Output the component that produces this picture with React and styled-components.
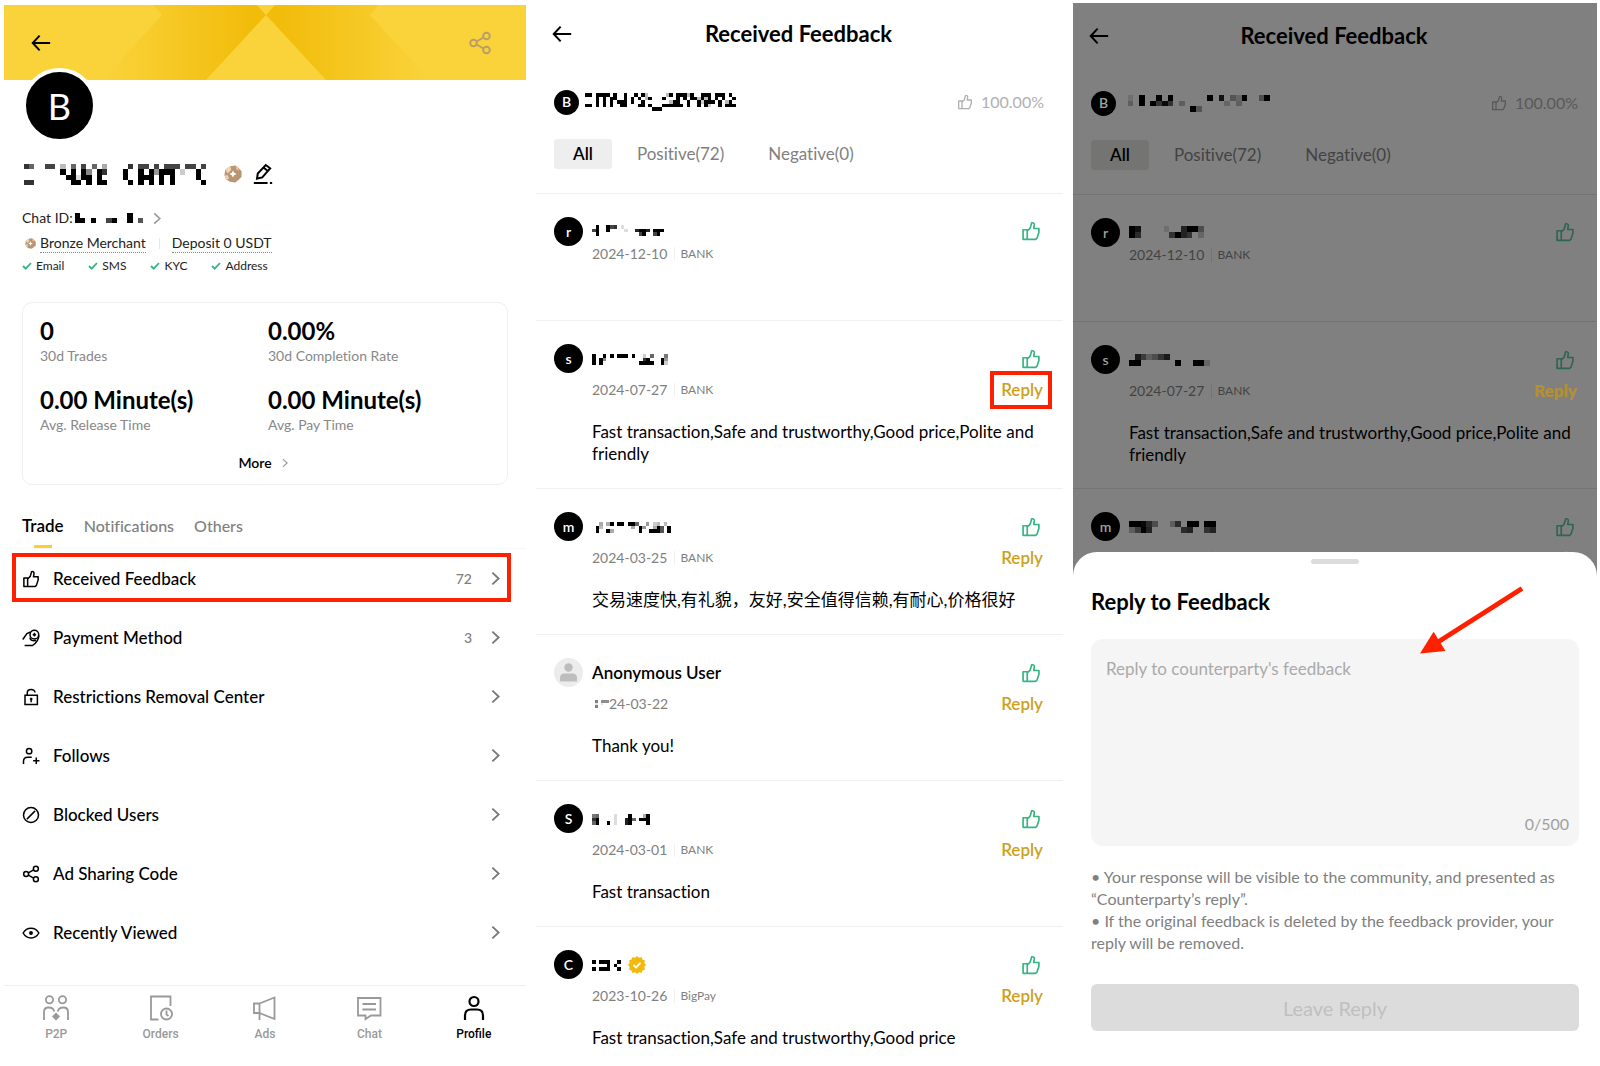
import React, { useState } from 'react';
import styled, { createGlobalStyle, ThemeProvider } from 'styled-components';

const GlobalStyle = createGlobalStyle`
  * {
    box-sizing: border-box;
  }
  body {
    margin: 0;
    background: #ffffff;
    color: #000000;
    font-family: Lato, 'Noto Sans CJK SC', sans-serif;
    font-size: 17px;
    line-height: 22px;
    font-variant-ligatures: none;
  }
  button, textarea {
    font: inherit;
    color: inherit;
    border: 0;
    padding: 0;
    background: none;
  }
  button {
    cursor: pointer;
  }
  a {
    color: inherit;
    text-decoration: none;
  }
  h1, h2, p, ul, dl, dd, dt {
    margin: 0;
    padding: 0;
  }
  svg {
    display: block;
    flex: none;
  }
`

const light = {
  bg: '#ffffff',
  text: '#000000',
  muted: '#808080',
  faint: '#b0b0b0',
  line: '#f0f0f0',
  chip: '#eeeeee',
  green: '#35b57f',
  gold: '#cda01b',
  initial: '#ffffff',
  replyWeight: 600
}

const dim = {
  bg: '#808080',
  text: '#000000',
  muted: '#434343',
  faint: '#595959',
  line: '#747474',
  chip: '#747472',
  green: '#2f6552',
  gold: '#b38f35',
  initial: '#a0a0a0',
  replyWeight: 800
}

/* ---------- page ---------- */

const Page = styled.div`
  display: grid;
  grid-template-columns: 522fr 527fr 524fr;
  gap: 10px;
  min-height: 100vh;
  padding: 0 3px 0 4px;
`

const ProfilePanel = styled.section`
  display: flex;
  flex-direction: column;
  min-width: 0;
  padding-top: 5px;
`

const FeedbackPanel = styled.section`
  position: relative;
  min-width: 0;
  margin-top: ${props => (props.$sheet ? '3px' : '0')};
  background: ${props => props.theme.bg};
  color: ${props => props.theme.text};
`

/* ---------- profile ---------- */

const Banner = styled.header`
  display: grid;
  height: 75px;
  background: #fad33b;

  > * {
    grid-area: 1 / 1;
  }
`

const BannerArt = styled.svg`
  width: 100%;
  height: 75px;
`

const BannerBar = styled.div`
  display: flex;
  align-items: center;
  justify-content: space-between;
  padding: 0 34px 0 26px;
`

const IconButton = styled.button`
  display: flex;
  color: ${props => props.$color || 'inherit'};
`

const Identity = styled.div`
  padding: 0 18px;
`

const BigAvatar = styled.div`
  position: relative;
  display: flex;
  align-items: center;
  justify-content: center;
  width: 75px;
  height: 75px;
  margin-top: -12px;
  border: 4px solid #ffffff;
  border-radius: 50%;
  background: #000000;
  color: #ffffff;
  font-size: 36px;
`

const NameLine = styled.div`
  display: flex;
  align-items: center;
  gap: 18px;
  height: 24px;
  margin-top: 19px;
  padding-left: 2px;
`

const NameIcons = styled.span`
  display: flex;
  align-items: center;
  gap: 10px;
`

const ChatId = styled.a`
  display: flex;
  align-items: center;
  gap: 2px;
  height: 20px;
  margin-top: 22px;
  font-size: 14px;
  line-height: 20px;
  color: #222222;

  > svg:last-child {
    margin-left: 8px;
  }
`

const Levels = styled.div`
  display: flex;
  align-items: center;
  height: 20px;
  margin-top: 5px;
  padding-left: 3px;
  font-size: 14px;
  line-height: 18px;
  color: #222222;

  > svg {
    margin-right: 4px;
  }
`

const Dotted = styled.span`
  border-bottom: 1px dotted #888888;
`

const LevelRule = styled.span`
  width: 1px;
  height: 11px;
  margin: 0 12px 0 13px;
  background: #e8e8e8;
`

const Checks = styled.ul`
  display: flex;
  gap: 24px;
  margin-top: 5px;
  list-style: none;
  font-size: 12px;
  line-height: 16px;
  color: #222222;

  li {
    display: flex;
    align-items: center;
    gap: 4px;
  }
`

const StatCard = styled.div`
  margin: 28px 18px 0;
  padding: 14px 17px 11px;
  border: 1px solid #efefef;
  border-radius: 10px;
`

const StatGrid = styled.dl`
  display: grid;
  grid-template-columns: 1fr 1fr;
  gap: 20px 6px;
`

const Stat = styled.div`
  display: flex;
  flex-direction: column-reverse;

  dt {
    margin-top: 1px;
    font-size: 14px;
    line-height: 20px;
    color: #888888;
  }
  dd {
    font-size: 24px;
    font-weight: 700;
    line-height: 28px;
  }
`

const More = styled.button`
  display: flex;
  align-items: center;
  gap: 10px;
  margin: 18px auto 0;
  padding-right: 4px;
  font-size: 14px;
  font-weight: 600;
  line-height: 20px;
`

const SectionTabs = styled.div`
  display: flex;
  gap: 20px;
  margin-top: 29px;
  padding: 0 18px;
  border-bottom: 1px solid #f6f6f6;
`

const SectionTab = styled.button`
  display: flex;
  flex-direction: column;
  align-items: center;
  font-size: ${props => (props.$active ? '17px' : '16px')};
  font-weight: ${props => (props.$active ? 600 : 500)};
  color: ${props => (props.$active ? '#000000' : '#808080')};
  line-height: 24px;

  &::after {
    content: '';
    width: 18px;
    height: 3px;
    margin-top: 7px;
    background: ${props => (props.$active ? '#f8d12f' : 'transparent')};
  }
`

const MenuRow = styled.a`
  position: relative;
  display: flex;
  align-items: center;
  height: 59px;
  padding: 0 26px 0 18px;
  font-weight: 500;

  &::before {
    content: '';
    position: absolute;
    inset: 4px 15px 6px 8px;
    border: ${props => (props.$marked ? '4px solid #ff2000' : '0')};
  }
`

const MenuLabel = styled.span`
  flex: 1;
  margin-left: 13px;
`

const MenuCount = styled.span`
  margin-right: 19px;
  font-size: 14px;
  color: #808080;
`

const BottomNav = styled.nav`
  display: grid;
  grid-template-columns: repeat(5, 1fr);
  margin-top: 23px;
  padding-top: 9px;
  border-top: 1px solid #f0f0f0;
`

const NavItem = styled.a`
  display: flex;
  flex-direction: column;
  align-items: center;
  gap: 4px;
  color: ${props => (props.$active ? '#000000' : '#999999')};
  font: 500 12px/18px Roboto, sans-serif;
`

/* ---------- feedback list ---------- */

const TitleBar = styled.header`
  display: grid;
  grid-template-columns: 24px 1fr 24px;
  align-items: center;
  height: ${props => (props.$short ? '66px' : '68px')};
  padding: 0 17px 0 15px;
`

const Title = styled.h1`
  font-size: 22px;
  font-weight: 700;
  line-height: 28px;
  text-align: center;
`

const Merchant = styled.div`
  display: flex;
  align-items: center;
  height: 30px;
  margin-top: 19px;
  padding: 0 19px 0 18px;
  gap: 6px;
`

const Initial = styled.span`
  display: flex;
  align-items: center;
  justify-content: center;
  flex: none;
  width: ${props => (props.$small ? '25px' : '29px')};
  height: ${props => (props.$small ? '25px' : '29px')};
  border-radius: 50%;
  background: #000000;
  color: ${props => props.theme.initial};
  font-size: 14px;
  font-weight: 600;
`

const Score = styled.span`
  display: flex;
  align-items: center;
  gap: 8px;
  margin-left: auto;
  font-size: 16px;
  color: ${props => props.theme.faint};
`

const Filters = styled.div`
  display: flex;
  gap: 6px;
  margin-top: 22px;
  padding: 0 18px 24px;
`

const Filter = styled.button`
  height: 30px;
  padding: 0 19px;
  border-radius: 3px;
  font-weight: ${props => (props.$active ? 600 : 400)};
  background: ${props => (props.$active ? props.theme.chip : 'transparent')};
  color: ${props => (props.$active ? props.theme.text : props.theme.muted)};
`

const Entry = styled.article`
  display: grid;
  grid-template-columns: 29px 1fr auto;
  grid-template-rows: ${props => (props.$bare ? '27px' : '30px')} 20px auto;
  column-gap: 9px;
  row-gap: ${props => (props.$bare ? '0' : '6px')};
  min-height: ${props => (props.$bare ? '127px' : '0')};
  padding: 23px 20px ${props => (props.$short ? '22px' : '23px')} 18px;
  border-top: 1px solid ${props => props.theme.line};

  &:last-child {
    padding-bottom: 12px;
  }
`

const EntryName = styled.div`
  display: flex;
  align-items: center;
  gap: 7px;
  font-weight: 600;
`

const EntryThumb = styled.span`
  display: flex;
  align-items: center;
  justify-content: flex-end;
  padding-right: 2px;
  color: ${props => props.theme.green};
`

const Meta = styled.div`
  grid-column: 2;
  display: flex;
  align-items: center;
  font-size: 14px;
  line-height: 20px;
  color: ${props => props.theme.muted};

  time {
    display: flex;
    align-items: center;
  }
`

const Channel = styled.span`
  margin-left: 7px;
  padding-left: 5px;
  border-left: 1px solid ${props => props.theme.line};
  font-size: 12px;
  line-height: 14px;
`

const Reply = styled.button`
  position: relative;
  color: ${props => props.theme.gold};
  font-weight: ${props => props.theme.replyWeight};
  line-height: 20px;

  &::after {
    content: '';
    position: absolute;
    inset: -9px -9px -9px -11px;
    border: ${props => (props.$marked ? '4px solid #ff2000' : '0')};
  }
`

const Comment = styled.p`
  grid-column: 2 / -1;
  margin-top: 15px;
`

/* ---------- reply sheet ---------- */

const Sheet = styled.form`
  position: absolute;
  left: 0;
  right: 0;
  bottom: 0;
  display: flex;
  flex-direction: column;
  padding: 7px 18px 35px;
  border-radius: 24px 24px 0 0;
  background: #ffffff;
  color: #000000;
`

const Handle = styled.span`
  align-self: center;
  width: 48px;
  height: 5px;
  border-radius: 3px;
  background: #dcdcdc;
`

const SheetTitle = styled.h2`
  margin-top: 24px;
  font-size: 22px;
  font-weight: 700;
  line-height: 28px;
`

const Field = styled.div`
  display: flex;
  flex-direction: column;
  height: 207px;
  margin-top: 23px;
  padding: 19px 10px 11px 15px;
  border-radius: 12px;
  background: #f5f5f5;
`

const FieldText = styled.textarea`
  flex: 1;
  resize: none;
  outline: 0;
  color: #000000;

  &::placeholder {
    color: #aaaaaa;
    opacity: 1;
  }
`

const Counter = styled.span`
  align-self: flex-end;
  font-size: 16px;
  color: #a0a0a0;
`

const Notes = styled.div`
  margin-top: 20px;
  font-size: 16px;
  color: #808080;
`

const Submit = styled.button`
  height: 47px;
  margin-top: 30px;
  border-radius: 6px;
  background: #dcdcdc;
  color: #c0c0c0;
  font-size: 20px;
`

const Pointer = styled.svg`
  position: absolute;
  top: 32px;
  right: 72px;
`

/* ---------- drawings ---------- */

// Pixelated text: every character is a cell, hex digit = darkness
const Mosaic = ({ rows, cell, tone = '#000000' }) => {
  const cols = Math.max(...rows.map(row => row.length))
  return (
    <svg width={Math.round(cols * cell)} height={Math.round(rows.length * cell)}
      viewBox={`0 0 ${cols} ${rows.length}`} preserveAspectRatio='none' shapeRendering='crispEdges' role='img' aria-label='Hidden'>
      {rows.map((row, y) => row.split('').map((c, x) => (
        c === '.' ? null : <rect key={x + '-' + y} x={x} y={y} width='1' height='1' fill={tone} opacity={parseInt(c, 16) / 15} />
      )))}
    </svg>
  )
}

const Icon = ({ size = 18, box = 24, stroke = 2, children }) => (
  <svg width={size} height={size} viewBox={`0 0 ${box} ${box}`} fill='none' stroke='currentColor' strokeWidth={stroke} aria-hidden='true'>
    {children}
  </svg>
)

const BackArrow = () => (
  <Icon size={22} stroke={2.2}><path d='M22 12H3M10.5 4L3 12l7.500 8' /></Icon>
)

const Chevron = ({ size = 15, color = '#777777', stroke = 2 }) => (
  <svg width={Math.round(size * 0.6)} height={size} viewBox='0 0 10 16' fill='none' stroke={color} strokeWidth={stroke} aria-hidden='true'>
    <path d='M1.500 1.500L8.500 8l-7 6.500' />
  </svg>
)

const Thumb = ({ size = 18, stroke = 2 }) => (
  <Icon size={size} stroke={stroke}>
    <path d='M2.500 10.500h5v11.500h-5zM7.500 12l3.500-3.500 1.800-6.200c2-.6 3.400.6 3.200 2.400L15.300 9h6.200v4.500l-2.300 7-1.700 1.500h-10' strokeLinejoin='round' />
  </Icon>
)

const Share = ({ size = 18, stroke = 2 }) => (
  <Icon size={size} stroke={stroke}>
    <circle cx='5.500' cy='12' r='3.300' />
    <circle cx='18.500' cy='5' r='3.300' />
    <circle cx='18.500' cy='19' r='3.300' />
    <path d='M8.500 10.500l7-4M8.500 13.500l7 4' />
  </Icon>
)

const HandCoin = () => (
  <Icon>
    <circle cx='16.500' cy='7.500' r='5.800' />
    <path d='M16.500 4.800l2.700 2.700-2.700 2.700-2.700-2.700z' fill='currentColor' stroke='none' />
    <path d='M1 14L6.500 6l5-2M10.500 11.500c.5 3.500 4 5 8 3.500M22.500 8.500c0 6.500-3 9.500-8.500 13.500H3.500' />
  </Icon>
)

const Lock = () => (
  <Icon>
    <path d='M4 9.500h16.500V22H4zM7 9.500V6.500C7 3.500 9 2 12 2s5 1 5.300 4' />
    <path d='M12.200 13v6M10.500 14.500h3.500' />
  </Icon>
)

const Follow = () => (
  <Icon>
    <circle cx='9.500' cy='5.500' r='3.600' />
    <path d='M2 22.500v-3.500c0-3.500 2-5.500 5.500-5.500H13M19 14v8.500M14.800 18.200h8.500' />
  </Icon>
)

const Blocked = () => (
  <Icon><circle cx='12' cy='12' r='10' /><path d='M6.500 17.500l11-11' /></Icon>
)

const Eye = () => (
  <Icon>
    <path d='M1.500 12C4 7.500 8 5.500 12 5.500s8 2 10.500 6.500c-2.500 4.500-6.500 6.500-10.500 6.500S4 16.500 1.500 12z' />
    <circle cx='12' cy='12' r='2.600' fill='currentColor' stroke='none' />
  </Icon>
)

const Pencil = () => (
  <Icon size={22} stroke={2.200}>
    <path d='M5.500 17l.8-5.500L15 2.200l4.800 3.600-8.600 9.900zM12.500 5l4.800 3.800M2 21.700h15M19.500 21.700h2.500' />
  </Icon>
)

const BronzeBadge = ({ size }) => (
  <svg width={size} height={size} viewBox='0 0 20 20' aria-hidden='true'>
    <path d='M7 1.500l6-1 3 2.500 3.500 4v6l-3 3.500-4 3-6-1-4.500-3L.5 11l1-6z' fill='#b99672' />
    <path d='M1.500 5L7 1.500l1 4-4 4zM.8 12l3.200-1 1.500 4-2.500 1.500z' fill='#f3d3b8' />
    <path d='M13 .8l3 2.200.5 3.500-3-1.500z' fill='#f6b8a0' />
    <path d='M10 6l1.300 2.700L14 10l-2.700 1.300L10 14l-1.300-2.700L6 10l2.700-1.300z' fill='#ffffff' />
  </svg>
)

const Tick = () => (
  <svg width='10' height='8' viewBox='0 0 10 8' fill='none' stroke='#35b57f' strokeWidth='1.800' aria-hidden='true'>
    <path d='M1 4l2.700 2.700L9 1' />
  </svg>
)

const Verified = () => (
  <svg width='18' height='18' viewBox='0 0 18 18' aria-hidden='true'>
    <path d='M9 0l2 1.700L13.500 1l1 2.500 2.500 1-.7 2.500L18 9l-1.700 2 .7 2.500-2.500 1-1 2.500-2.500-.7L9 18l-2-1.700-2.500.7-1-2.500-2.500-1 .7-2.500L0 9l1.700-2L1 4.500l2.500-1 1-2.500 2.500.7z' fill='#f3b90f' />
    <path d='M5.500 9l2.500 2.400 4.500-4.600' fill='none' stroke='#ffffff' strokeWidth='1.800' />
  </svg>
)

const AnonymousAvatar = () => (
  <svg width='29' height='29' viewBox='0 0 29 29' aria-hidden='true'>
    <circle cx='14.500' cy='14.500' r='14.500' fill='#ececec' />
    <circle cx='14.500' cy='9.500' r='4.200' fill='#bdbdbd' />
    <path d='M6 23.500v-3.500c0-3 1.500-4.500 4.500-4.500h8c3 0 4.500 1.500 4.500 4.500v3.500z' fill='#bdbdbd' />
  </svg>
)

const P2PIcon = () => (
  <Icon size={26} box={26} stroke={1.800}>
    <circle cx='6.500' cy='4.800' r='3.600' /><circle cx='19.500' cy='4.800' r='3.600' />
    <path d='M1 25v-8c0-3 1.500-4.500 4.500-4.500 3.500 0 5.200 1 5.700 4M25 25v-8c0-3-1.500-4.500-4.500-4.500-3.500 0-5.200 1-5.700 4' />
    <path d='M13 17.500l4 4-4 4-4-4z' fill='currentColor' stroke='none' />
  </Icon>
)

const OrdersIcon = () => (
  <Icon size={26} box={26} stroke={1.800}>
    <path d='M10.500 24.500H3V1.500h19.500v9.500' />
    <circle cx='18.500' cy='19' r='5.500' />
    <path d='M18.500 15.500v4l2 1.500' />
  </Icon>
)

const AdsIcon = () => (
  <Icon size={26} box={26} stroke={1.800}>
    <path d='M2 8.500h5.500v9.500H2zM7.500 8.500l15-6v21.500l-15-6M7.500 18v7' />
  </Icon>
)

const ChatIcon = () => (
  <Icon size={26} box={26} stroke={1.800}>
    <path d='M2 3h22.500v17.500H15L9.500 24v-3.500H2zM6.500 9h13.500M6.500 14.500h13.500' />
  </Icon>
)

const PersonIcon = () => (
  <Icon size={26} box={26} stroke={2.200}>
    <circle cx='13' cy='6.500' r='4.500' />
    <path d='M4 25v-4.500c0-4 2-6 6-6h6c4 0 6 2 6 6V25' />
  </Icon>
)

/* ---------- data ---------- */

const menu = [
  { label: 'Received Feedback', icon: <Thumb />, count: 72, marked: true },
  { label: 'Payment Method', icon: <HandCoin />, count: 3 },
  { label: 'Restrictions Removal Center', icon: <Lock /> },
  { label: 'Follows', icon: <Follow /> },
  { label: 'Blocked Users', icon: <Blocked /> },
  { label: 'Ad Sharing Code', icon: <Share /> },
  { label: 'Recently Viewed', icon: <Eye /> }
]

const stats = [
  ['30d Trades', '0'],
  ['30d Completion Rate', '0.00%'],
  ['Avg. Release Time', '0.00 Minute(s)'],
  ['Avg. Pay Time', '0.00 Minute(s)']
]

const nav = [
  ['P2P', <P2PIcon />],
  ['Orders', <OrdersIcon />],
  ['Ads', <AdsIcon />],
  ['Chat', <ChatIcon />],
  ['Profile', <PersonIcon />]
]

const profileName = [
  'c9..bb.4.9.b.9.5....c.bb.b.bbb.bb.b',
  '.......f.f.f7.fc...f..f.f6fff.3..f.',
  '........ff2ff.f....f..fff.f.f....f.',
  'cc.......ff.f.ff....f.f.f.f.f.....f'
]

const chatId = ['f.........f..', 'ff.f..bf..f.a']

const feedback = [
  {
    initial: 'r', date: '2024-12-10', channel: 'BANK', cell: 3.6, bare: true,
    name: ['.f..fbc.2...........', 'bf..f....2..dffd.fff', '.f...........bf..bf.']
  },
  {
    initial: 's', date: '2024-07-27', channel: 'BANK', cell: 3.6, marked: true,
    name: ['f..f.f.fff.f..3.9...8', 'f.f7..........cf...f6', 'f.f..........ffff..f3'],
    text: 'Fast transaction,Safe and trustworthy,Good price,Polite and friendly'
  },
  {
    initial: 'm', date: '2024-03-25', channel: 'BANK', cell: 3.6,
    name: ['..5.5f.ff.ff9..6.34.4...', '.f4........5.f6..5fa.f.', '.f..f5.......f..fffa.f.'],
    text: '交易速度快,有礼貌，友好,安全值得信赖,有耐心,价格很好'
  },
  { anonymous: true, date: '24-03-22', text: 'Thank you!' },
  {
    initial: 'S', date: '2024-03-01', channel: 'BANK', cell: 3.6,
    name: ['89....2...f...5f', 'cf....2..df9.fff', '9f..f.2..df....f'],
    text: 'Fast transaction'
  },
  {
    initial: 'C', date: '2023-10-26', channel: 'BigPay', cell: 3.6, verified: true,
    name: ['f.fff..f', '....f.f.', 'f.fff..f'],
    text: 'Fast transaction,Safe and trustworthy,Good price'
  }
]

// only the part of the list above the sheet
const feedbackBehind = [
  { ...feedback[0], cell: 5.8, name: ['fd....2..bff6', 'fa.....9fb9.3'] },
  { ...feedback[1], cell: 5.8, marked: false, name: ['.c8469c.......', 'ff......f..ff3'] },
  { ...feedback[2], cell: 5.8, name: ['ffea6..4a.ff.ff', '48fb.....ab..9b'], text: '' }
]

const merchantName = {
  cell: 3.5,
  rows: [
    'ff.ffff.f..f..f.f4.....4f.fff4f..fff.fff.f.',
    '...f.f.ff..f.f.f.4f...f...f.f.ff4f4f.f.f..f',
    '...f.f.f.fff.f..f.......4ff..f..f3fff.f.4f.',
    'ff.f.f.f..ff...ff.f...ffffff.f..f.f3..f.fff',
    '...................fff.....................'
  ]
}

const merchantNameBehind = {
  cell: 5.7,
  rows: [
    '.2.f..f.f......f.d.53f..6f',
    '.4.f.f9e9.4.......3.4.....',
    '............f5............'
  ]
}

/* ---------- screens ---------- */

const Profile = () => (
  <ProfilePanel>
    <Banner>
      <BannerArt viewBox='0 0 522 75' preserveAspectRatio='none' aria-hidden='true'>
        <defs>
          <linearGradient id='bandLeft' x1='0' x2='1'>
            <stop offset='0' stopColor='#fad33b' />
            <stop offset='0.9' stopColor='#f2bc0b' />
          </linearGradient>
          <linearGradient id='bandRight' x1='1' x2='0'>
            <stop offset='0' stopColor='#fad33b' />
            <stop offset='0.9' stopColor='#f2bc0b' />
          </linearGradient>
        </defs>
        <path d='M149 0l9 10-60 65h104l60-65-9-10z' fill='url(#bandLeft)' />
        <path d='M375 0l-9 10 60 65H322l-60-65 9-10z' fill='url(#bandRight)' />
      </BannerArt>
      <BannerBar>
        <IconButton type='button' aria-label='Back'><BackArrow /></IconButton>
        <IconButton type='button' aria-label='Share' $color='#bb9d68'><Share size={24} /></IconButton>
      </BannerBar>
    </Banner>

    <Identity>
      <BigAvatar>B</BigAvatar>
      <NameLine>
        <Mosaic rows={profileName} cell={5.2} />
        <NameIcons>
          <BronzeBadge size={18} />
          <IconButton type='button' aria-label='Edit name'><Pencil /></IconButton>
        </NameIcons>
      </NameLine>
      <ChatId href='#chat-id'>
        Chat ID:
        <Mosaic rows={chatId} cell={5.2} />
        <Chevron size={13} color='#999999' />
      </ChatId>
      <Levels>
        <BronzeBadge size={11} />
        <Dotted>Bronze Merchant</Dotted>
        <LevelRule />
        <Dotted>Deposit 0 USDT</Dotted>
      </Levels>
      <Checks>
        {['Email', 'SMS', 'KYC', 'Address'].map(item => <li key={item}><Tick />{item}</li>)}
      </Checks>
    </Identity>

    <StatCard>
      <StatGrid>
        {stats.map(([label, value]) => (
          <Stat key={label}>
            <dt>{label}</dt>
            <dd>{value}</dd>
          </Stat>
        ))}
      </StatGrid>
      <More type='button'>More <Chevron size={10} color='#999999' /></More>
    </StatCard>

    <SectionTabs>
      <SectionTab type='button' $active>Trade</SectionTab>
      <SectionTab type='button'>Notifications</SectionTab>
      <SectionTab type='button'>Others</SectionTab>
    </SectionTabs>

    {menu.map(item => (
      <MenuRow key={item.label} href='#menu' $marked={item.marked}>
        {item.icon}
        <MenuLabel>{item.label}</MenuLabel>
        {item.count && <MenuCount>{item.count}</MenuCount>}
        <Chevron />
      </MenuRow>
    ))}

    <BottomNav>
      {nav.map(([label, icon]) => (
        <NavItem key={label} href='#nav' $active={label === 'Profile'}>
          {icon}
          {label}
        </NavItem>
      ))}
    </BottomNav>
  </ProfilePanel>
)

const FeedbackEntry = ({ item, short }) => (
  <Entry $bare={item.bare} $short={short}>
    {item.anonymous ? <AnonymousAvatar /> : <Initial>{item.initial}</Initial>}
    <EntryName>
      {item.anonymous ? 'Anonymous User' : <Mosaic rows={item.name} cell={item.cell} />}
      {item.verified && <Verified />}
    </EntryName>
    <EntryThumb><Thumb size={20} /></EntryThumb>
    <Meta>
      <time>
        {item.anonymous && <Mosaic rows={['.a.999', '.2.2..', '.a....']} cell={2.800} tone='#444444' />}
        {item.date}
      </time>
      {item.channel && <Channel>{item.channel}</Channel>}
    </Meta>
    {!item.bare && <Reply type='button' $marked={item.marked}>Reply</Reply>}
    {item.text && <Comment>{item.text}</Comment>}
  </Entry>
)

const FeedbackScreen = ({ entries, name, short }) => (
  <>
    <TitleBar $short={short}>
      <IconButton type='button' aria-label='Back'><BackArrow /></IconButton>
      <Title>Received Feedback</Title>
    </TitleBar>
    <Merchant>
      <Initial $small>B</Initial>
      <Mosaic rows={name.rows} cell={name.cell} />
      <Score><Thumb size={16} />100.00%</Score>
    </Merchant>
    <Filters>
      <Filter type='button' $active>All</Filter>
      <Filter type='button'>Positive(72)</Filter>
      <Filter type='button'>Negative(0)</Filter>
    </Filters>
    <div>
      {entries.map(item => <FeedbackEntry key={item.date} item={item} short={short} />)}
    </div>
  </>
)

const ReplySheet = () => {
  const [message, setMessage] = useState('')

  return (
    <Sheet onSubmit={e => e.preventDefault()}>
      <Handle />
      <SheetTitle id='reply-title'>Reply to Feedback</SheetTitle>
      <Field>
        <FieldText
          aria-labelledby='reply-title'
          placeholder="Reply to counterparty's feedback"
          maxLength={500}
          value={message}
          onChange={e => setMessage(e.target.value)}
        />
        <Counter>{message.length}/500</Counter>
      </Field>
      <Notes>
        <p>• Your response will be visible to the community, and presented as “Counterparty’s reply”.</p>
        <p>• If the original feedback is deleted by the feedback provider, your reply will be removed.</p>
      </Notes>
      <Submit type='submit' disabled={!message}>Leave Reply</Submit>
      <Pointer width='107' height='72' viewBox='0 0 107 72' aria-hidden='true'>
        <path d='M104 4.500L20 58' stroke='#ff2000' strokeWidth='5' />
        <path d='M2 69.500l13.600-21.800L27.500 67z' fill='#ff2000' />
      </Pointer>
    </Sheet>
  )
}

const App = () => {
  return (
    <>
      <GlobalStyle />
      <Page>
        <Profile />
        <ThemeProvider theme={light}>
          <FeedbackPanel>
            <FeedbackScreen entries={feedback} name={merchantName} />
          </FeedbackPanel>
        </ThemeProvider>
        <ThemeProvider theme={dim}>
          <FeedbackPanel $sheet>
            <FeedbackScreen entries={feedbackBehind} name={merchantNameBehind} short />
            <ReplySheet />
          </FeedbackPanel>
        </ThemeProvider>
      </Page>
    </>
  );
}

export default App;
